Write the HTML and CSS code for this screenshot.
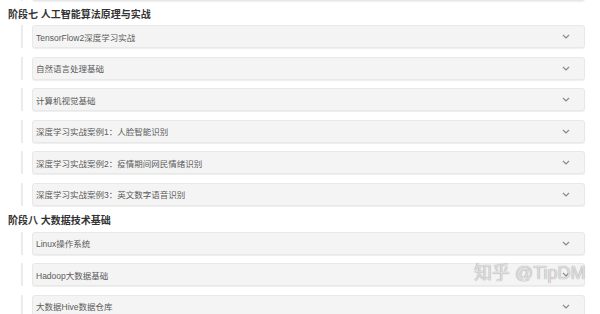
FILE: index.html
```html
<!DOCTYPE html>
<html lang="zh-CN">
<head>
  <meta charset="UTF-8">
  <meta name="viewport" content="width=device-width, initial-scale=1.0">
  <title>课程大纲</title>
  <link rel="stylesheet" href="styles.css">
</head>
<body>
  <main class="course">
    <section class="stage">
      <ul class="lessons">
        <li><div class="lesson"><span></span><svg class="chev" viewBox="0 0 8 5"><polyline points="1,1 4,4 7,1"/></svg></div></li>
      </ul>
    </section>

    <section class="stage">
      <h2>阶段七 人工智能算法原理与实战</h2>
      <ul class="lessons">
        <li><div class="lesson"><span>TensorFlow2深度学习实战</span><svg class="chev" viewBox="0 0 8 5"><polyline points="1,1 4,4 7,1"/></svg></div></li>
        <li><div class="lesson"><span>自然语言处理基础</span><svg class="chev" viewBox="0 0 8 5"><polyline points="1,1 4,4 7,1"/></svg></div></li>
        <li><div class="lesson"><span>计算机视觉基础</span><svg class="chev" viewBox="0 0 8 5"><polyline points="1,1 4,4 7,1"/></svg></div></li>
        <li><div class="lesson"><span>深度学习实战案例1：人脸智能识别</span><svg class="chev" viewBox="0 0 8 5"><polyline points="1,1 4,4 7,1"/></svg></div></li>
        <li><div class="lesson"><span>深度学习实战案例2：疫情期间网民情绪识别</span><svg class="chev" viewBox="0 0 8 5"><polyline points="1,1 4,4 7,1"/></svg></div></li>
        <li><div class="lesson"><span>深度学习实战案例3：英文数字语音识别</span><svg class="chev" viewBox="0 0 8 5"><polyline points="1,1 4,4 7,1"/></svg></div></li>
      </ul>
    </section>

    <section class="stage">
      <h2>阶段八 大数据技术基础</h2>
      <ul class="lessons">
        <li><div class="lesson"><span>Linux操作系统</span><svg class="chev" viewBox="0 0 8 5"><polyline points="1,1 4,4 7,1"/></svg></div></li>
        <li><div class="lesson"><span>Hadoop大数据基础</span><svg class="chev" viewBox="0 0 8 5"><polyline points="1,1 4,4 7,1"/></svg></div></li>
        <li><div class="lesson"><span>大数据Hive数据仓库</span><svg class="chev" viewBox="0 0 8 5"><polyline points="1,1 4,4 7,1"/></svg></div></li>
      </ul>
    </section>
  </main>

  <div class="watermark">知乎 @TipDM</div>
</body>
</html>
```

FILE: styles.css
```css
/* 课程大纲 */
:root {
  --card-bg: #f4f4f4;
  --card-border: #e8e8e8;
  --line: #ebebeb;
  --text: #5a5a5a;
  --title: #333;
}
* { box-sizing: border-box; margin: 0; padding: 0; }
body {
  font-family: "Liberation Sans", "Noto Sans CJK SC", sans-serif;
  background: #fff;
  color: var(--text);
  width: 600px;
  height: 314px;
  overflow: hidden;
  position: relative;
}
.course {
  margin-top: -22.5px;
  padding: 0 15px 0 8px;
  display: flex;
  flex-direction: column;
  gap: 4px;
}
.stage + .stage + .stage { margin-top: 1.5px; }
.stage h2 {
  font-size: 10px;
  line-height: 20px;
  height: 20px;
  font-weight: bold;
  color: var(--title);
  margin-bottom: 0.5px;
}
.lessons {
  list-style: none;
  margin-left: 13px;
  display: flex;
  flex-direction: column;
  gap: 8.5px;
}
.lessons li {
  border-left: 2px solid var(--line);
  padding-left: 9px;
}
.lesson {
  height: 23px;
  display: flex;
  align-items: center;
  justify-content: space-between;
  padding: 0 14px 0 3px;
  background: var(--card-bg);
  border: 1px solid var(--card-border);
  border-radius: 3px;
  box-shadow: 0 1px 1px rgba(0,0,0,0.07);
  font-size: 8.5px;
  color: var(--text);
}
.chev {
  width: 8px;
  height: 5px;
  fill: none;
  stroke: #8a8a8a;
  stroke-width: 1.2;
}
.watermark {
  position: absolute;
  left: 474px;
  top: 262px;
  font-size: 18px;
  line-height: 22px;
  color: rgba(238,238,238,0.85);
  text-shadow: 0 0 1px rgba(0,0,0,0.5);
  white-space: nowrap;
}
```
